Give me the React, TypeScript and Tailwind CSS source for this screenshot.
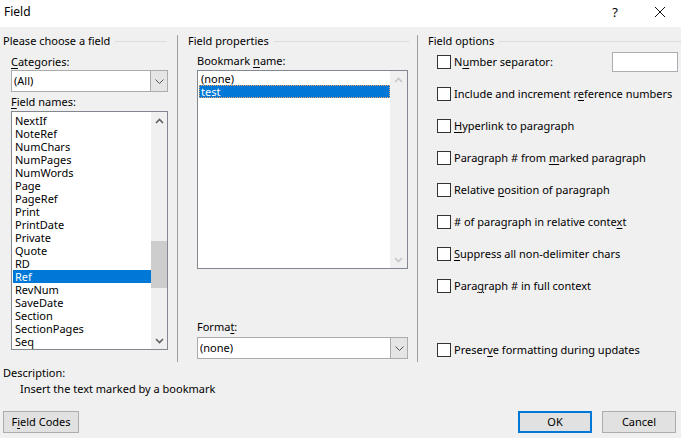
import React from "react";

const font = { fontFamily: '"Noto Sans", "Liberation Sans", sans-serif' };

// mnemonic letter (underlined access key)
function U({ children }: { children: React.ReactNode }) {
  return <span className="underline decoration-1 underline-offset-[2px]">{children}</span>;
}

function Chevron({ dir, color }: { dir: "up" | "down"; color: string }) {
  return (
    <svg width="9" height="6" viewBox="0 0 9 6">
      <path
        d={dir === "up" ? "M1 5 L4.5 1.5 L8 5" : "M1 1 L4.5 4.5 L8 1"}
        fill="none"
        stroke={color}
        strokeWidth="1.6"
      />
    </svg>
  );
}

function ComboArrow() {
  return (
    <svg width="9" height="5" viewBox="0 0 9 5">
      <path d="M0.5 0.5 L4.5 4.5 L8.5 0.5" fill="none" stroke="#555" strokeWidth="1" />
    </svg>
  );
}

function GroupHeader({ title, mr }: { title: string; mr: string }) {
  return (
    <div className={`flex items-center h-[14px] ${mr}`}>
      <span className="whitespace-nowrap">{title}</span>
      <div className="flex-1 ml-[5px] border-t border-[#dcdcdc]" />
    </div>
  );
}

function Combo({ value, width }: { value: string; width: string }) {
  return (
    <div className={`flex ${width} h-[22px] border border-[#acacac] bg-white`}>
      <div className="flex-1 flex items-center pl-[2px]">{value}</div>
      <div className="w-[17px] bg-[#e5e5e5] border-l border-[#acacac] flex items-center justify-center">
        <ComboArrow />
      </div>
    </div>
  );
}

function CheckRow({ children, className = "" }: { children: React.ReactNode; className?: string }) {
  return (
    <div className={`flex items-center h-[20px] pl-[19px] ${className}`}>
      <div className="w-[14px] h-[14px] border border-[#333] bg-white shrink-0" />
      <span className="ml-[3px] whitespace-nowrap">{children}</span>
    </div>
  );
}

const fieldNames = [
  "NextIf",
  "NoteRef",
  "NumChars",
  "NumPages",
  "NumWords",
  "Page",
  "PageRef",
  "Print",
  "PrintDate",
  "Private",
  "Quote",
  "RD",
  "Ref",
  "RevNum",
  "SaveDate",
  "Section",
  "SectionPages",
  "Seq",
];

export default function App() {
  return (
    <div
      className="w-[681px] h-[438px] bg-[#f0f0f0] flex flex-col text-[11px] leading-[14px] text-black overflow-hidden"
      style={font}
    >
      {/* title bar */}
      <div className="h-[27px] bg-white flex items-start pt-[5px] pl-[4px] shrink-0 text-[12px]">
        <span>Field</span>
        <span className="ml-auto text-[13px] mr-[36px]">?</span>
        <svg width="12" height="12" viewBox="0 0 12 12" className="mt-[1px] mr-[15px]">
          <path d="M1 1 L11 11 M11 1 L1 11" stroke="#111" strokeWidth="1" />
        </svg>
      </div>

      {/* main columns */}
      <div className="flex mt-[7px] h-[328px] shrink-0">
        {/* column 1 */}
        <div className="w-[177px] shrink-0 flex flex-col pl-[3px]">
          <GroupHeader title="Please choose a field" mr="mr-[10px]" />
          <div className="mt-[7px] ml-[8px]">
            <U>C</U>ategories:
          </div>
          <div className="mt-[1px] ml-[8px]">
            <Combo value="(All)" width="w-[157px]" />
          </div>
          <div className="mt-[3px] ml-[8px]">
            <U>F</U>ield names:
          </div>
          <div className="mt-[2px] ml-[8px] w-[157px] h-[239px] border border-[#828790] bg-white flex">
            <div className="flex-1 pt-[2px] pl-[1px]">
              {fieldNames.map((n) => (
                <div
                  key={n}
                  className={`h-[13px] leading-[13px] pl-[2px] ${
                    n === "Ref" ? "bg-[#0078d7] text-white" : ""
                  }`}
                >
                  {n}
                </div>
              ))}
            </div>
            <div className="w-[16px] flex flex-col bg-[#f0f0f0]">
              <div className="h-[17px] flex items-center justify-center">
                <Chevron dir="up" color="#606060" />
              </div>
              <div className="flex-1">
                <div className="mt-[112px] h-[47px] bg-[#cdcdcd]" />
              </div>
              <div className="h-[17px] flex items-center justify-center">
                <Chevron dir="down" color="#606060" />
              </div>
            </div>
          </div>
        </div>

        <div className="w-px shrink-0 bg-[#a0a0a0] mt-[1px]" />

        {/* column 2 */}
        <div className="w-[239px] shrink-0 flex flex-col pl-[10px]">
          <GroupHeader title="Field properties" mr="mr-[8px]" />
          <div className="mt-[6px] ml-[9px]">
            Bookmark <U>n</U>ame:
          </div>
          <div className="mt-[2px] ml-[9px] w-[211px] h-[199px] border border-[#828790] bg-white flex">
            <div className="flex-1 pt-[1px] pl-[1px]">
              <div className="h-[13px] leading-[13px] pl-[2px]">(none)</div>
              <div className="h-[13px] leading-[11px] pl-[1px] bg-[#0078d7] text-white border border-dotted border-[#f4a460]">
                test
              </div>
            </div>
            <div className="w-[17px] flex flex-col bg-[#f0f0f0]">
              <div className="h-[17px] flex items-center justify-center">
                <Chevron dir="up" color="#c6c6c6" />
              </div>
              <div className="flex-1" />
              <div className="h-[17px] flex items-center justify-center">
                <Chevron dir="down" color="#c6c6c6" />
              </div>
            </div>
          </div>
          <div className="mt-[51px] ml-[9px]">
            Forma<U>t</U>:
          </div>
          <div className="mt-[3px] ml-[9px]">
            <Combo value="(none)" width="w-[211px]" />
          </div>
        </div>

        <div className="w-px shrink-0 bg-[#a0a0a0] mt-[1px]" />

        {/* column 3 */}
        <div className="flex-1 min-w-0 flex flex-col">
          <div className="pl-[10px]">
            <GroupHeader title="Field options" mr="mr-0" />
          </div>
          <div className="flex items-center h-[20px] mt-[4px]">
            <CheckRow>
              N<U>u</U>mber separator:
            </CheckRow>
            <div className="ml-auto mr-[3px] w-[66px] h-[20px] bg-white border border-[#abadb3]" />
          </div>
          <CheckRow className="mt-[12px]">
            Include and increment r<U>e</U>ference numbers
          </CheckRow>
          <CheckRow className="mt-[12px]">
            <U>H</U>yperlink to paragraph
          </CheckRow>
          <CheckRow className="mt-[12px]">
            Paragraph # from <U>m</U>arked paragraph
          </CheckRow>
          <CheckRow className="mt-[12px]">
            Relative <U>p</U>osition of paragraph
          </CheckRow>
          <CheckRow className="mt-[12px]">
            # of paragraph in relative conte<U>x</U>t
          </CheckRow>
          <CheckRow className="mt-[12px]">
            <U>S</U>uppress all non-delimiter chars
          </CheckRow>
          <CheckRow className="mt-[12px]">
            Para<U>g</U>raph # in full context
          </CheckRow>
          <CheckRow className="mt-[44px]">
            Preser<U>v</U>e formatting during updates
          </CheckRow>
        </div>
      </div>

      {/* description */}
      <div className="mt-[4px] pl-[3px]">Description:</div>
      <div className="mt-[2px] pl-[20px]">Insert the text marked by a bookmark</div>

      {/* buttons */}
      <div className="mt-[15px] flex pl-[3px] pr-[5px]">
        <button className="w-[76px] h-[22px] bg-[#e1e1e1] border border-[#adadad]">
          F<U>i</U>eld Codes
        </button>
        <button className="ml-auto w-[74px] h-[22px] bg-[#e1e1e1] border-2 border-[#0078d7]">
          OK
        </button>
        <button className="ml-[10px] w-[74px] h-[22px] bg-[#e1e1e1] border border-[#adadad]">
          Cancel
        </button>
      </div>
    </div>
  );
}
